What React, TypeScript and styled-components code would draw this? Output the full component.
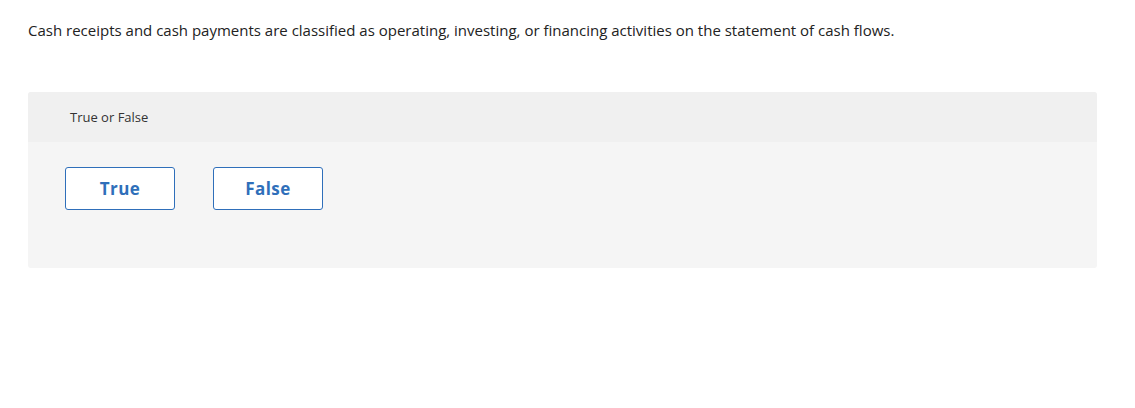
import React from 'react'
import styled, { createGlobalStyle } from 'styled-components'

const GlobalStyle = createGlobalStyle`
  body {
    margin: 0;
    background: #fff;
    font-family: 'Open Sans', 'Liberation Sans', sans-serif;
    color: #333;
  }
`

const Page = styled.main`
  padding: 20px 28px 0 28px;
`

const Prompt = styled.p`
  margin: 0;
  font-size: 15px;
  line-height: 20px;
  color: #222;
`

const Panel = styled.section`
  margin-top: 52px;
  width: 1069px;
  background: #f5f5f5;
  border-radius: 3px;
  overflow: hidden;
`

const PanelHeader = styled.div`
  height: 50px;
  display: flex;
  align-items: center;
  padding-left: 42px;
  background: #f0f0f0;
  font-size: 13px;
  color: #333;
`

const Choices = styled.div`
  display: flex;
  gap: 38px;
  padding: 25px 37px 58px;
`

const Choice = styled.button`
  width: 110px;
  height: 43px;
  padding: 0;
  background: #fff;
  border: 1px solid #2f6fba;
  border-radius: 3px;
  color: #2f6fba;
  font-family: inherit;
  font-size: 17px;
  font-weight: 700;
  letter-spacing: 0.4px;
  cursor: pointer;
`

export default function App() {
  return (
    <>
      <GlobalStyle />
      <Page>
        <Prompt>
          Cash receipts and cash payments are classified as operating, investing, or financing activities on the
          statement of cash flows.
        </Prompt>
        <Panel>
          <PanelHeader>True or False</PanelHeader>
          <Choices>
            <Choice>True</Choice>
            <Choice>False</Choice>
          </Choices>
        </Panel>
      </Page>
    </>
  )
}
